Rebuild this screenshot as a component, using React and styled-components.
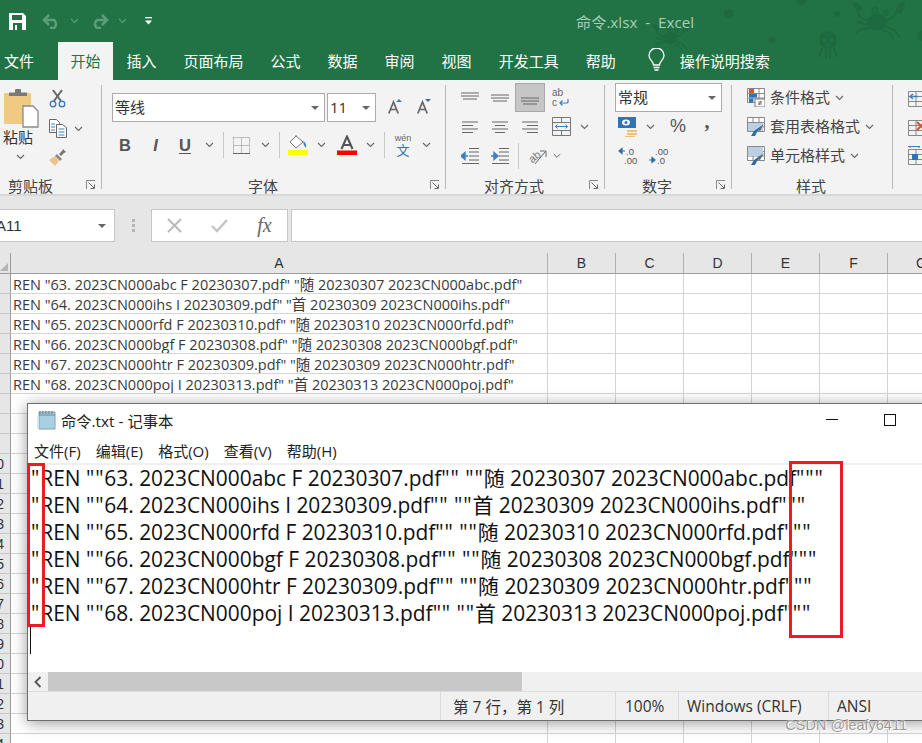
import React from 'react'
import styled, { createGlobalStyle } from 'styled-components'

const GlobalStyle = createGlobalStyle`
  html, body {
    margin: 0;
    padding: 0;
    background: #fff;
  }
  body {
    font-family: "Noto Sans CJK SC", "Open Sans", sans-serif;
  }
`

const UI_FONT = `"Open Sans", "Noto Sans CJK SC", sans-serif`
const GREEN = '#217346'

const Page = styled.div`
  position: relative;
  width: 922px;
  height: 743px;
  overflow: hidden;
  background: #fff;
  font-family: ${UI_FONT};
`

/* title bar and tabs share one green header */
const Header = styled.div`
  position: relative;
  background: ${GREEN};
`
const TitleBar = styled.div`
  position: relative;
  z-index: 1;
  height: 42px;
  display: flex;
  align-items: center;
`
const QuickAccess = styled.div`
  width: 576px;
  display: flex;
  align-items: center;
  padding-left: 9px;
  box-sizing: border-box;
`
const QuickSlot = styled.span`
  display: flex;
  justify-content: ${p => (p.$start ? 'flex-start' : 'center')};
  align-items: center;
  width: ${p => p.$w}px;
  height: 20px;
`
const TitleText = styled.div`
  font-size: 15.2px;
  color: #a9cdb8;
  white-space: pre;
`
const Decoration = styled.svg`
  position: absolute;
  left: 640px;
  top: 0;
  pointer-events: none;
`

const TabBar = styled.div`
  position: relative;
  z-index: 1;
  height: 38px;
  display: flex;
  align-items: stretch;
`
const Tab = styled.div`
  display: flex;
  align-items: center;
  padding: 0 13.5px 2px;
  font-size: 15px;
  color: #fff;
  white-space: nowrap;
`
const FileTab = styled(Tab)`
  padding: 0 24px 2px 4px;
`
const ActiveTab = styled(Tab)`
  padding: 0 12.5px 2px;
  color: ${GREEN};
  background: #f3f3f3;
`
const SearchTab = styled(Tab)`
  padding: 0 0 2px 18.5px;
  gap: 15px;
`

/* ribbon */
const Ribbon = styled.div`
  height: 114px;
  background: #f3f3f3;
  border-bottom: 2px solid #d8d8d8;
  display: flex;
  color: #444;
  overflow: hidden;
`
const Group = styled.div`
  width: ${p => p.$w}px;
  flex: none;
  display: flex;
  flex-direction: column;
  padding-top: 3px;
  box-sizing: border-box;
`
const GroupBody = styled.div`
  height: 87px;
  flex: none;
`
const GroupFooter = styled.div`
  height: 30px;
  flex: none;
  display: flex;
  align-items: center;
  padding: 0 5px 0 ${p => p.$pl}px;
  font-size: 15px;
  color: #444;
`
const Launcher = styled.svg`
  margin-left: auto;
`
const GroupDivider = styled.div`
  width: 1px;
  flex: none;
  margin: 5px 0;
  background: #b9b9b9;
`
const ToolRow = styled.div`
  display: flex;
  align-items: center;
  height: ${p => p.$h || 29}px;
  padding-left: ${p => p.$pl || 0}px;
  margin-top: ${p => p.$mt || 0}px;
`
const Slot = styled.div`
  width: ${p => p.$w}px;
  flex: none;
  height: 100%;
  display: flex;
  align-items: center;
  justify-content: center;
  box-sizing: border-box;
  background: ${p => (p.$selected ? '#c6c6c6' : 'transparent')};
  border: ${p => (p.$selected ? '1px solid #a8a8a8' : 'none')};
`
const ThinRule = styled.div`
  width: 1px;
  height: 26px;
  background: #c8c8c8;
`
const ComboBox = styled.div`
  width: ${p => p.$w}px;
  height: 29px;
  flex: none;
  margin-right: ${p => p.$mr || 0}px;
  box-sizing: border-box;
  background: #fff;
  border: 1px solid #ababab;
  display: flex;
  align-items: center;
  justify-content: space-between;
  padding: 0 5px 0 2px;
  font-size: 15px;
  color: #333;
`
const ComboText = styled.span`
  margin-bottom: 2px;
`
const ComboArrow = styled.span`
  width: 0;
  height: 0;
  border-left: 4px solid transparent;
  border-right: 4px solid transparent;
  border-top: 4px solid #666;
`
const StyleLetter = styled.span`
  font-family: "Liberation Sans", sans-serif;
  font-size: 16.5px;
  font-weight: ${p => (p.$bold ? 700 : 400)};
  font-style: ${p => (p.$italic ? 'italic' : 'normal')};
  text-decoration: ${p => (p.$under ? 'underline' : 'none')};
  text-underline-offset: 2px;
  color: #555;
`
const PasteColumn = styled.div`
  width: 40px;
  display: flex;
  flex-direction: column;
  align-items: flex-start;
  padding-left: 3px;
  font-size: 15px;
  color: #333;
`
const PasteLabel = styled.div`
  line-height: 18px;
`
const PasteCaret = styled.div`
  padding: 8px 0 0 13px;
  line-height: 0;
`
const ClipboardTools = styled.div`
  display: flex;
  flex-direction: column;
  padding: 1px 0 0 6px;
  gap: 11px;
`
const ClipboardBody = styled.div`
  display: flex;
  height: 100%;
  padding-top: 5px;
  box-sizing: border-box;
`
const CopyRow = styled.div`
  display: flex;
  align-items: center;
  gap: 7px;
`
const WenGlyph = styled.div`
  display: flex;
  flex-direction: column;
  align-items: center;
  gap: 1px;
`
const WenTop = styled.span`
  font-family: "Liberation Sans", sans-serif;
  font-size: 9px;
  line-height: 9px;
  color: #666;
`
const WenBottom = styled.span`
  font-size: 13px;
  line-height: 13px;
  color: #2e75b6;
`
const Percent = styled.span`
  font-family: "Liberation Sans", sans-serif;
  font-size: 18px;
  color: #555;
`
const Comma = styled.span`
  font-family: "Liberation Serif", serif;
  font-size: 20px;
  font-weight: 700;
  color: #555;
  line-height: 14px;
  margin-bottom: 12px;
`
const StyleButton = styled.div`
  height: 29px;
  display: flex;
  align-items: center;
  padding-left: 15px;
  gap: 5px;
  font-size: 15px;
  color: #444;
`
const StyleName = styled.span`
  margin-bottom: 2px;
`

/* formula bar */
const FormulaBar = styled.div`
  height: 57px;
  background: #e6e6e6;
  display: flex;
  padding-top: 13px;
  box-sizing: border-box;
`
const FormulaBox = styled.div`
  height: 33px;
  box-sizing: border-box;
  background: #fff;
  border: 1px solid #c6c6c6;
  display: flex;
  align-items: center;
`
const NameBox = styled(FormulaBox)`
  width: 116px;
  margin-left: -1px;
  justify-content: space-between;
  padding: 0 8px 0 0;
  font-family: "Liberation Sans", sans-serif;
  font-size: 15px;
  color: #333;
  text-indent: -4px;
`
const Grip = styled.div`
  width: 36px;
  display: flex;
  flex-direction: column;
  align-items: center;
  justify-content: center;
  gap: 2px;
  height: 33px;
`
const GripDot = styled.span`
  width: 3px;
  height: 3px;
  background: #b5b5b5;
`
const FormulaActions = styled(FormulaBox)`
  width: 137px;
  margin-right: 3px;
`
const FormulaAction = styled.div`
  flex: 1;
  display: flex;
  justify-content: center;
  align-items: center;
  font-family: "Liberation Serif", serif;
  font-style: italic;
  font-size: 20px;
  color: #666;
`
const FormulaInput = styled(FormulaBox)`
  flex: 1;
  border-right: none;
`

/* sheet */
const SheetRow = styled.div`
  display: flex;
  height: ${p => p.$h || 20}px;
  box-sizing: border-box;
`
const Corner = styled.div`
  width: 11px;
  flex: none;
  box-sizing: border-box;
  background: #e6e6e6;
  border-right: 1px solid #9c9c9c;
  border-bottom: 1px solid #9c9c9c;
  display: flex;
  align-items: flex-end;
  justify-content: flex-end;
  padding: 0 2px 2px 0;
`
const CornerMark = styled.span`
  width: 0;
  height: 0;
  border-left: 8px solid transparent;
  border-bottom: 8px solid #b5b5b5;
`
const ColumnHead = styled.div`
  width: ${p => p.$w}px;
  flex: none;
  box-sizing: border-box;
  background: #e6e6e6;
  border-right: 1px solid #b0b0b0;
  border-bottom: 1px solid #9c9c9c;
  text-align: center;
  font-family: "Liberation Sans", sans-serif;
  font-size: 14px;
  line-height: 21px;
  color: #333;
`
const RowHead = styled.div`
  width: 11px;
  flex: none;
  box-sizing: border-box;
  background: #e6e6e6;
  border-right: 1px solid #9c9c9c;
  border-bottom: 1px solid #c6c6c6;
  overflow: hidden;
  direction: rtl;
  padding-right: 6px;
  font-family: "Liberation Sans", sans-serif;
  font-size: 14px;
  line-height: 20px;
  color: #333;
  white-space: nowrap;
`
const Cell = styled.div`
  width: ${p => p.$w}px;
  flex: none;
  box-sizing: border-box;
  border-right: 1px solid #d4d4d4;
  border-bottom: 1px solid #d4d4d4;
  padding-left: 2px;
  font-size: 14.5px;
  line-height: 21px;
  color: #3a3a3a;
  white-space: pre;
  overflow: hidden;
`

/* notepad window */
const Notepad = styled.div`
  position: absolute;
  left: 27px;
  top: 403px;
  width: 905px;
  height: 318px;
  box-sizing: border-box;
  background: #fff;
  border: 1px solid #6f6f6f;
  box-shadow: 0 2px 14px rgba(0, 0, 0, 0.4);
  display: flex;
  flex-direction: column;
`
const NoteTitle = styled.div`
  height: 33px;
  flex: none;
  display: flex;
  align-items: center;
  padding: 0 0 2px 8px;
  box-sizing: border-box;
  gap: 5px;
  font-size: 15.3px;
  color: #222;
`
const WindowButtons = styled.div`
  margin-left: auto;
  display: flex;
  align-items: center;
  margin-right: 35px;
`
const MinLine = styled.span`
  width: 12px;
  height: 1px;
  background: #111;
`
const MaxBox = styled.span`
  width: 12px;
  height: 12px;
  box-sizing: border-box;
  border: 1px solid #111;
  margin-left: 46px;
`
const NoteMenu = styled.div`
  height: 26px;
  flex: none;
  display: flex;
  align-items: center;
  gap: 15.2px;
  padding-left: 6px;
  font-size: 15px;
  color: #222;
`
const NoteEditor = styled.div`
  flex: 1;
  border-top: 2px solid #f0f0f0;
  padding: 0 0 0 3px;
  font-size: 20.9px;
  line-height: 27px;
  color: #111;
  white-space: pre;
`
const QuoteMark = styled.span`
  letter-spacing: 0.9px;
`
const Caret = styled.div`
  width: 1px;
  height: 27px;
  margin-left: -1px;
  background: #111;
`
const ScrollTrack = styled.div`
  height: 19px;
  flex: none;
  background: #f0f0f0;
  display: flex;
  align-items: center;
`
const ScrollArrow = styled.div`
  width: 20px;
  display: flex;
  justify-content: center;
`
const ScrollThumb = styled.div`
  width: 474px;
  height: 100%;
  background: #c8c8c8;
`
const StatusBar = styled.div`
  height: 29px;
  flex: none;
  display: flex;
  background: #f0f0f0;
  border-top: 1px solid #dcdcdc;
  box-sizing: border-box;
  font-size: 15.5px;
  color: #333;
`
const StatusCell = styled.div`
  width: ${p => p.$w}px;
  flex: none;
  box-sizing: border-box;
  display: flex;
  align-items: center;
  padding-left: ${p => p.$pl || 0}px;
  border-left: ${p => (p.$plain ? 'none' : '1px solid #dadada')};
  white-space: pre;
`

/* annotations */
const RedBox = styled.div`
  position: absolute;
  left: ${p => p.$x}px;
  top: ${p => p.$y}px;
  width: ${p => p.$w}px;
  height: ${p => p.$h}px;
  box-sizing: border-box;
  border: 3px solid #ed1c24;
`
const Watermark = styled.div`
  position: absolute;
  right: 15px;
  top: 717px;
  font-family: "Liberation Sans", sans-serif;
  font-size: 14.5px;
  color: #9a9a9a;
  text-shadow: 0 0 1px #fff, 1px 1px 0 #fff;
  white-space: pre;
`

const Chevron = ({ color = '#666' }) => (
  <svg width="9" height="6" viewBox="0 0 9 6">
    <path d="M1 1l3.5 3.5L8 1" fill="none" stroke={color} strokeWidth="1.1" />
  </svg>
)

const LauncherIcon = () => (
  <Launcher width="10" height="10" viewBox="0 0 10 10">
    <path d="M.5 9V.5H9" fill="none" stroke="#888" />
    <path d="M2.5 2.5L8 8M4.5 8.5h4v-4" fill="none" stroke="#666" />
  </Launcher>
)

const LineIcon = ({ lines, w = 20, h = 16, color = '#666' }) => (
  <svg width={w} height={h} viewBox={`0 0 ${w} ${h}`}>
    {lines.map(([x1, x2, y], i) => (
      <line key={i} x1={x1} x2={x2} y1={y} y2={y} stroke={color} strokeWidth="1" />
    ))}
  </svg>
)

const SaveIcon = () => (
  <svg width="17" height="17" viewBox="0 0 17 17">
    <path d="M0 0h14l3 3v14H0z" fill="#fff" />
    <rect x="3" y="2" width="10" height="5" fill={GREEN} />
    <rect x="4" y="10" width="9" height="7" fill={GREEN} />
    <rect x="6" y="12" width="2" height="5" fill="#fff" />
  </svg>
)

const ArrowTurn = ({ flip }) => (
  <svg width="19" height="15" viewBox="0 0 19 15" style={flip ? { transform: 'scaleX(-1)' } : undefined}>
    <path d="M2 6h10a5 5 0 010 8H8" fill="none" stroke="#5f9c7c" strokeWidth="2.6" />
    <path d="M7 1L2 6l5 5" fill="none" stroke="#5f9c7c" strokeWidth="2.6" />
  </svg>
)

const CustomizeIcon = () => (
  <svg width="7" height="8" viewBox="0 0 7 8">
    <rect x="0" y="0" width="7" height="1.3" fill="#fff" />
    <path d="M0 3.5h7L3.5 7.5z" fill="#fff" />
  </svg>
)

const Crab = ({ x, y, s = 1, color = '#1e6a40' }) => (
  <g transform={`translate(${x} ${y}) scale(${s})`} fill="none" stroke={color} strokeWidth="2" strokeLinecap="round">
    <ellipse cx="0" cy="0" rx="10" ry="8.5" fill={color} stroke="none" />
    <path d="M-10-2q-8-1-9-9M10-2q8-2 10-10" />
    <path d="M-19-11l-5-7q6-1 8 5zM20-12q1-7 7-8q0 6-4 11z" fill={color} />
    <path d="M-10 3l-9-3M-9 6l-9 2-3 3M9 5l8 3 5 6M7 8l7 4 2 6" />
    <circle cx="-2" cy="-12" r="2.5" />
    <circle cx="9" cy="-9" r="2" />
  </g>
)

const Octopus = ({ x, y, color = '#1e6a40' }) => (
  <g transform={`translate(${x} ${y})`}>
    <circle cx="0" cy="-4" r="9" fill={color} />
    <circle cx="-3.5" cy="-4" r="2" fill={GREEN} />
    <circle cx="3.5" cy="-4" r="2" fill={GREEN} />
    <circle cx="0" cy="1" r="1.5" fill={GREEN} />
    <path d="M-6 4q-1 6-4 9M-2 5v9M2 5v9M6 4q1 6 4 9" fill="none" stroke={color} strokeWidth="2" />
  </g>
)

const TitleDecoration = () => (
  <Decoration width="282" height="80" viewBox="0 0 282 80">
    <Crab x={30} y={38} s={0.72} />
    <circle cx="89" cy="14" r="5" fill="#1e6a40" />
    <circle cx="132" cy="40" r="3.5" fill="#1e6a40" />
    <circle cx="161" cy="0" r="5" fill="#1e6a40" />
    <circle cx="197" cy="14" r="3" fill="#1e6a40" />
    <Crab x={237} y={22} />
    <Octopus x={188} y={44} />
    <circle cx="282" cy="36" r="5" fill="#1e6a40" />
  </Decoration>
)

const BulbIcon = () => (
  <svg width="17" height="24" viewBox="0 0 17 24">
    <path d="M5.5 17c0-4-4.5-5-4.500-9.500a7.500 7.500 0 0115 0C16 12 11.500 13 11.500 17z" fill="none" stroke="#fff" strokeWidth="1.3" />
    <path d="M5.500 19.500h6M6.500 22h4" stroke="#fff" strokeWidth="1.4" />
  </svg>
)

const PasteIcon = () => (
  <svg width="36" height="40" viewBox="0 0 36 40">
    <rect x="1" y="5" width="27" height="31" rx="1" fill="#f0c982" />
    <path d="M6 8V4.500h6V2q0-1 1-1h4q1 0 1 1v2.500h6V8z" fill="#7a7a7a" />
    <path d="M20 18h10l5 5v16H20z" fill="#fff" stroke="#8a8a8a" strokeWidth="1.300" />
  </svg>
)

const CutIcon = () => (
  <svg width="17" height="19" viewBox="0 0 17 19">
    <path d="M4 1l8 11M13 1L5 12" stroke="#666" strokeWidth="2" />
    <circle cx="4" cy="15" r="2.800" fill="none" stroke="#3f7fc1" strokeWidth="1.400" />
    <circle cx="13" cy="15" r="2.800" fill="none" stroke="#3f7fc1" strokeWidth="1.400" />
  </svg>
)

const CopyIcon = () => (
  <svg width="18" height="19" viewBox="0 0 18 19">
    <path d="M.5.5h7l3 3v10H.5z" fill="#fff" stroke="#666" />
    <path d="M7.500 5.500h6l4 3v10h-10z" fill="#fff" stroke="#666" />
    <path d="M2 5h4M2 8h4M2 11h4M9.500 10h6M9.500 13h6M9.500 16h6" stroke="#3f7fc1" />
  </svg>
)

const PainterIcon = () => (
  <svg width="18" height="17" viewBox="0 0 18 17">
    <path d="M0 11l6-4 4 5-4 5q-3-3-6-6z" fill="#eec587" />
    <path d="M6 7l5 5 2-2-5-5z" fill="#8a8a8a" />
    <path d="M10 5l3-3 1-2 3 3-2 1-3 3z" fill="#777" />
  </svg>
)

const GrowA = ({ down }) => (
  <svg width="15" height="17" viewBox="0 0 15 17">
    <path d="M.8 14.500L5.500 3l4.700 11.500M2.500 10.500h6" fill="none" stroke="#666" strokeWidth="1.700" />
    <path d={down ? 'M8 0h6l-3 3z' : 'M8 3l3-3 3 3z'} fill={down ? '#3f6f9e' : '#3f7fc1'} />
  </svg>
)

const BorderIcon = () => (
  <svg width="17" height="17" viewBox="0 0 17 17">
    <path d="M.5.5h16M.5 8.500h16M.5.500v16M8.500.500v16M16.500.500v16" fill="none" stroke="#888" strokeDasharray="1 1" />
    <path d="M0 16.500h17" stroke="#666" />
  </svg>
)

const FillIcon = () => (
  <svg width="20" height="20" viewBox="0 0 20 20">
    <path d="M8 1L2 7l6 6 7-6z" fill="#fff" stroke="#777" />
    <path d="M8 1v-1" stroke="#777" />
    <path d="M15 6q4 2 3 7-3-3-3-7z" fill="#3f7fc1" />
    <rect x="0" y="15" width="20" height="5" fill="#ffff00" />
  </svg>
)

const FontColorIcon = () => (
  <svg width="20" height="20" viewBox="0 0 20 20">
    <path d="M4.500 14L10 1.500 15.500 14M6.300 10h7.400" fill="none" stroke="#555" strokeWidth="2.100" />
    <rect x="0" y="15.500" width="20" height="4.500" fill="#ff0000" />
  </svg>
)

const WrapIcon = () => (
  <svg width="18" height="20" viewBox="0 0 18 20">
    <text x="0" y="8" fontFamily="Liberation Sans" fontSize="10" fill="#666">ab</text>
    <text x="0" y="18" fontFamily="Liberation Sans" fontSize="10" fill="#666">c</text>
    <path d="M16 11v3q0 1-1 1H8M10.500 12.500L8 15l2.500 2.500" fill="none" stroke="#3f7fc1" strokeWidth="1.200" />
  </svg>
)

const MergeIcon = () => (
  <svg width="19" height="19" viewBox="0 0 19 19">
    <path d="M.5.500h18v18H.5zM.5 5.500h18M.5 13.500h18M9.500.500v5M9.500 13.500v5" fill="none" stroke="#777" />
    <path d="M3 9.500h13M5.500 7.500l-2 2 2 2M13.500 7.500l2 2-2 2" fill="none" stroke="#3f7fc1" />
  </svg>
)

const IndentIcon = ({ right }) => (
  <svg width="18" height="16" viewBox="0 0 18 16">
    <path d="M8 .500h10M8 4h10M8 8h10M8 12h10M1 15.500h17" stroke="#666" />
    <path d={right ? 'M0 8h5M3 4.500l4 3.500-4 3.500z' : 'M7 8H2M4 4.500L0 8l4 3.500z'} fill="#3f7fc1" stroke="#3f7fc1" strokeWidth="1.400" />
  </svg>
)

const OrientIcon = () => (
  <svg width="20" height="18" viewBox="0 0 20 18">
    <text x="1" y="11" fontFamily="Liberation Sans" fontSize="11" fill="#777" transform="rotate(-40 8 9) translate(0 2)">ab</text>
    <path d="M8 17L18 5M13 4h6v6" fill="none" stroke="#666" />
  </svg>
)

const CurrencyIcon = () => (
  <svg width="20" height="20" viewBox="0 0 20 20">
    <rect x="0" y="0" width="18" height="11" fill="#2e75b6" />
    <ellipse cx="8" cy="5.500" rx="4" ry="3" fill="#fff" />
    <circle cx="8" cy="5.500" r="1.500" fill="#2e75b6" />
    <path d="M9 13h10v2H9zM9 16h10v2H9zM7 19h10v1H7z" fill="#edc077" />
  </svg>
)

const DecimalIcon = ({ more }) => (
  <svg width="20" height="18" viewBox="0 0 20 18">
    <text x={more ? 6 : 8} y="7.500" fontFamily="Liberation Sans" fontSize="9.500" fill="#555">{more ? '.00' : '.0'}</text>
    <text x={more ? 8 : 6} y="17" fontFamily="Liberation Sans" fontSize="9.500" fill="#555">{more ? '.0' : '.00'}</text>
    {more
      ? <path d="M0 13h5M3 10.500L6 13l-3 2.500z" fill="#2e6da4" stroke="#2e6da4" strokeWidth="1.200" />
      : <path d="M7 4H2M4 1.500L1 4l3 2.500z" fill="#2e6da4" stroke="#2e6da4" strokeWidth="1.200" />}
  </svg>
)

const TableStyleIcon = ({ conditional, plain }) => (
  <svg width="18" height="19" viewBox="0 0 18 19">
    <path d="M.5.500h17v14H.5zM.5 5.500h17M.5 10h17M6 .500v14M12 .500v14" fill="#fff" stroke="#888" />
    {conditional ? (
      <>
        <rect x="2" y="1" width="5" height="4" fill="#d2552b" />
        <rect x="2" y="6" width="8" height="3.500" fill="#2e75b6" />
        <rect x="2" y="10.500" width="4" height="4" fill="#2e75b6" />
        <rect x="8" y="11" width="10" height="8" fill="#fff" stroke="#777" />
        <path d="M11 14h4M11 16h4M14 13l-2 4" stroke="#555" strokeWidth=".8" />
      </>
    ) : (
      <>
        <rect x="1" y={plain ? 1 : 6} width="15" height={plain ? 9 : 8} fill="#bcd0e4" />
        <path d="M17 7l-7 8-2 4-4 0 3-5z" fill="#2e6da4" />
        <path d="M17 7l-6 6 2 1z" fill="#666" />
      </>
    )}
  </svg>
)

const CellsIcon = ({ kind }) => (
  <svg width="18" height="20" viewBox="0 0 18 20">
    <path d="M.5 3.500h15v15H.5zM.5 8.500h15M.5 13.500h15M8 3.500v15" fill="none" stroke="#888" />
    {kind === 'insert' && <path d="M2 8.500h8M5 6L2 8.500 5 11" fill="none" stroke="#3f7fc1" strokeWidth="1.500" />}
    {kind === 'delete' && <path d="M9 5l4 4-4 4M17 5l-4 4 4 4" fill="none" stroke="#d2552b" strokeWidth="2" />}
    {kind === 'format' && (
      <>
        <path d="M0 .500h12M2 0v2M11 0v2" stroke="#3f7fc1" />
        <rect x="4" y="8" width="6" height="6" fill="#2e75b6" />
      </>
    )}
  </svg>
)

const CrossIcon = () => (
  <svg width="15" height="15" viewBox="0 0 15 15">
    <path d="M1 1l13 13M14 1L1 14" stroke="#b8b8b8" strokeWidth="1.800" />
  </svg>
)

const CheckIcon = () => (
  <svg width="17" height="14" viewBox="0 0 17 14">
    <path d="M1 7l5 5L16 1" fill="none" stroke="#c4c4c4" strokeWidth="2.400" />
  </svg>
)

const NotepadIcon = () => (
  <svg width="20" height="20" viewBox="0 0 20 20">
    <path d="M3 2h16v17H3z" fill="#a9cfe2" stroke="#7ba3b8" />
    <path d="M3 5h16" stroke="#5f8fa8" />
    <path d="M4 1v3M7 1v3M10 1v3M13 1v3M16 1v3" stroke="#777" />
    <path d="M1 7l2-1v13H1z" fill="#d6e8f0" />
  </svg>
)

const TABS = ['插入', '页面布局', '公式', '数据', '审阅', '视图', '开发工具', '帮助']

const CELL_ROWS = [
  'REN "63. 2023CN000abc F 20230307.pdf" "随 20230307 2023CN000abc.pdf"',
  'REN "64. 2023CN000ihs I 20230309.pdf" "首 20230309 2023CN000ihs.pdf"',
  'REN "65. 2023CN000rfd F 20230310.pdf" "随 20230310 2023CN000rfd.pdf"',
  'REN "66. 2023CN000bgf F 20230308.pdf" "随 20230308 2023CN000bgf.pdf"',
  'REN "67. 2023CN000htr F 20230309.pdf" "随 20230309 2023CN000htr.pdf"',
  'REN "68. 2023CN000poj I 20230313.pdf" "首 20230313 2023CN000poj.pdf"',
]

const NOTE_LINES = [
  '"REN ""63. 2023CN000abc F 20230307.pdf"" ""随 20230307 2023CN000abc.pdf"""',
  '"REN ""64. 2023CN000ihs I 20230309.pdf"" ""首 20230309 2023CN000ihs.pdf"""',
  '"REN ""65. 2023CN000rfd F 20230310.pdf"" ""随 20230310 2023CN000rfd.pdf"""',
  '"REN ""66. 2023CN000bgf F 20230308.pdf"" ""随 20230308 2023CN000bgf.pdf"""',
  '"REN ""67. 2023CN000htr F 20230309.pdf"" ""随 20230309 2023CN000htr.pdf"""',
  '"REN ""68. 2023CN000poj I 20230313.pdf"" ""首 20230313 2023CN000poj.pdf"""',
]

const COLUMNS = [['A', 537], ['B', 68], ['C', 68], ['D', 68], ['E', 68], ['F', 68], ['G', 68]]

const rowLabel = i => (i >= 9 ? String(i + 1) : '')

// quotes sit further apart in the notepad font, so they get their own spacing
const NoteLine = ({ text }) => (
  <div>
    {text.split(/("+)/).map((part, i) => (
      part.startsWith('"') ? <QuoteMark key={i}>{part}</QuoteMark> : part
    ))}
  </div>
)

const App = () => (
  <Page>
    <GlobalStyle />
    <Header>
      <TitleDecoration />
      <TitleBar>
        <QuickAccess>
          <QuickSlot $w={25} $start><SaveIcon /></QuickSlot>
          <QuickSlot $w={34}><ArrowTurn /></QuickSlot>
          <QuickSlot $w={12}><Chevron color="#5f9c7c" /></QuickSlot>
          <QuickSlot $w={38}><ArrowTurn flip /></QuickSlot>
          <QuickSlot $w={9}><Chevron color="#5f9c7c" /></QuickSlot>
          <QuickSlot $w={42}><CustomizeIcon /></QuickSlot>
        </QuickAccess>
        <TitleText>命令.xlsx  -  Excel</TitleText>
      </TitleBar>

      <TabBar>
        <FileTab>文件</FileTab>
        <ActiveTab>开始</ActiveTab>
        {TABS.map(t => <Tab key={t}>{t}</Tab>)}
        <SearchTab><BulbIcon />操作说明搜索</SearchTab>
      </TabBar>
    </Header>

    <Ribbon>
      <Group $w={101}>
        <GroupBody>
          <ClipboardBody>
            <PasteColumn>
              <PasteIcon />
              <PasteLabel>粘贴</PasteLabel>
              <PasteCaret><Chevron /></PasteCaret>
            </PasteColumn>
            <ClipboardTools>
              <CutIcon />
              <CopyRow><CopyIcon /><Chevron /></CopyRow>
              <PainterIcon />
            </ClipboardTools>
          </ClipboardBody>
        </GroupBody>
        <GroupFooter $pl={8}>剪贴板<LauncherIcon /></GroupFooter>
      </Group>
      <GroupDivider />

      <Group $w={343}>
        <GroupBody>
          <ToolRow $pl={10} $mt={10}>
            <ComboBox $w={213} $mr={2}><ComboText>等线</ComboText><ComboArrow /></ComboBox>
            <ComboBox $w={49}><ComboText>11</ComboText><ComboArrow /></ComboBox>
            <Slot $w={5} />
            <Slot $w={29}><GrowA /></Slot>
            <Slot $w={29}><GrowA down /></Slot>
          </ToolRow>
          <ToolRow $pl={8} $mt={8} $h={30}>
            <Slot $w={30}><StyleLetter $bold>B</StyleLetter></Slot>
            <Slot $w={31}><StyleLetter $bold $italic>I</StyleLetter></Slot>
            <Slot $w={28}><StyleLetter $bold $under>U</StyleLetter></Slot>
            <Slot $w={20}><Chevron /></Slot>
            <Slot $w={8}><ThinRule /></Slot>
            <Slot $w={28}><BorderIcon /></Slot>
            <Slot $w={20}><Chevron /></Slot>
            <Slot $w={8}><ThinRule /></Slot>
            <Slot $w={30}><FillIcon /></Slot>
            <Slot $w={16}><Chevron /></Slot>
            <Slot $w={36}><FontColorIcon /></Slot>
            <Slot $w={10}><Chevron /></Slot>
            <Slot $w={18}><ThinRule /></Slot>
            <Slot $w={20}>
              <WenGlyph><WenTop>wén</WenTop><WenBottom>文</WenBottom></WenGlyph>
            </Slot>
            <Slot $w={26}><Chevron /></Slot>
          </ToolRow>
        </GroupBody>
        <GroupFooter $pl={146}>字体<LauncherIcon /></GroupFooter>
      </Group>
      <GroupDivider />

      <Group $w={158}>
        <GroupBody>
          <ToolRow $pl={9}>
            <Slot $w={30}><LineIcon lines={[[1, 19, 3], [1, 19, 6], [3, 17, 9]]} /></Slot>
            <Slot $w={30}><LineIcon lines={[[1, 19, 5], [1, 19, 8], [3, 17, 11]]} /></Slot>
            <Slot $w={30} $selected><LineIcon lines={[[1, 19, 8], [1, 19, 11], [3, 17, 14]]} /></Slot>
            <Slot $w={32}><WrapIcon /></Slot>
          </ToolRow>
          <ToolRow $pl={9}>
            <Slot $w={30}><LineIcon lines={[[2, 18, 3], [2, 13, 6.500], [2, 18, 10], [2, 13, 13.500]]} /></Slot>
            <Slot $w={30}><LineIcon lines={[[2, 18, 3], [5, 15, 6.500], [2, 18, 10], [5, 15, 13.500]]} /></Slot>
            <Slot $w={30}><LineIcon lines={[[2, 18, 3], [7, 18, 6.500], [2, 18, 10], [7, 18, 13.500]]} /></Slot>
            <Slot $w={32}><MergeIcon /></Slot>
            <Slot $w={14}><Chevron /></Slot>
          </ToolRow>
          <ToolRow $pl={9}>
            <Slot $w={30}><IndentIcon /></Slot>
            <Slot $w={30}><IndentIcon right /></Slot>
            <Slot $w={6}><ThinRule /></Slot>
            <Slot $w={32}><OrientIcon /></Slot>
            <Slot $w={8}><Chevron /></Slot>
          </ToolRow>
        </GroupBody>
        <GroupFooter $pl={38}>对齐方式<LauncherIcon /></GroupFooter>
      </Group>
      <GroupDivider />

      <Group $w={126}>
        <GroupBody>
          <ToolRow $pl={10}>
            <ComboBox $w={107}><ComboText>常规</ComboText><ComboArrow /></ComboBox>
          </ToolRow>
          <ToolRow $pl={13}>
            <Slot $w={20}><CurrencyIcon /></Slot>
            <Slot $w={24}><Chevron /></Slot>
            <Slot $w={32}><Percent>%</Percent></Slot>
            <Slot $w={26}><Comma>,</Comma></Slot>
          </ToolRow>
          <ToolRow $pl={13}>
            <Slot $w={20}><DecimalIcon /></Slot>
            <Slot $w={11} />
            <Slot $w={20}><DecimalIcon more /></Slot>
          </ToolRow>
        </GroupBody>
        <GroupFooter $pl={37}>数字<LauncherIcon /></GroupFooter>
      </Group>
      <GroupDivider />

      <Group $w={160}>
        <GroupBody>
          <StyleButton><TableStyleIcon conditional /><StyleName>条件格式</StyleName><Chevron /></StyleButton>
          <StyleButton><TableStyleIcon /><StyleName>套用表格格式</StyleName><Chevron /></StyleButton>
          <StyleButton><TableStyleIcon plain /><StyleName>单元格样式</StyleName><Chevron /></StyleButton>
        </GroupBody>
        <GroupFooter $pl={64}>样式</GroupFooter>
      </Group>
      <GroupDivider />

      <Group $w={40}>
        <GroupBody>
          <StyleButton><CellsIcon kind="insert" /></StyleButton>
          <StyleButton><CellsIcon kind="delete" /></StyleButton>
          <StyleButton><CellsIcon kind="format" /></StyleButton>
        </GroupBody>
      </Group>
    </Ribbon>

    <FormulaBar>
      <NameBox>A11<ComboArrow /></NameBox>
      <Grip><GripDot /><GripDot /><GripDot /></Grip>
      <FormulaActions>
        <FormulaAction><CrossIcon /></FormulaAction>
        <FormulaAction><CheckIcon /></FormulaAction>
        <FormulaAction>fx</FormulaAction>
      </FormulaActions>
      <FormulaInput />
    </FormulaBar>

    <SheetRow $h={21}>
      <Corner><CornerMark /></Corner>
      {COLUMNS.map(([name, w]) => <ColumnHead key={name} $w={w}>{name}</ColumnHead>)}
    </SheetRow>
    {Array.from({ length: 24 }, (_, i) => (
      <SheetRow key={i}>
        <RowHead>{rowLabel(i)}</RowHead>
        {COLUMNS.map(([name, w]) => (
          <Cell key={name} $w={w}>
            {name === 'A' ? CELL_ROWS[i] : ''}
          </Cell>
        ))}
      </SheetRow>
    ))}

    <Notepad>
      <NoteTitle>
        <NotepadIcon />
        命令.txt - 记事本
        <WindowButtons><MinLine /><MaxBox /></WindowButtons>
      </NoteTitle>
      <NoteMenu>
        <span>文件(F)</span>
        <span>编辑(E)</span>
        <span>格式(O)</span>
        <span>查看(V)</span>
        <span>帮助(H)</span>
      </NoteMenu>
      <NoteEditor>
        {NOTE_LINES.map(line => <NoteLine key={line} text={line} />)}
        <Caret />
      </NoteEditor>
      <ScrollTrack>
        <ScrollArrow><svg width="8" height="12" viewBox="0 0 8 12"><path d="M6.500 1L1.500 6l5 5" fill="none" stroke="#555" strokeWidth="1.800" /></svg></ScrollArrow>
        <ScrollThumb />
      </ScrollTrack>
      <StatusBar>
        <StatusCell $w={412} $plain />
        <StatusCell $w={175} $pl={12}>第 7 行，第 1 列</StatusCell>
        <StatusCell $w={63} $pl={9}>100%</StatusCell>
        <StatusCell $w={150} $pl={8}>Windows (CRLF)</StatusCell>
        <StatusCell $w={90} $pl={8}>ANSI</StatusCell>
      </StatusBar>
    </Notepad>

    <RedBox $x={27} $y={463} $w={18} $h={164} />
    <RedBox $x={789} $y={461} $w={54} $h={177} />
    <Watermark>CSDN @leafy6411</Watermark>
  </Page>
)

export default App
